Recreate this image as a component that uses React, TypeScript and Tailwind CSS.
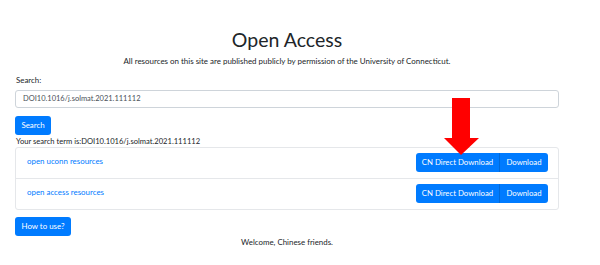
import React from "react";

function Row({ label }: { label: string }) {
  return (
    <div className="flex h-[30px] items-start justify-between pl-[11px] pr-[10px]">
      <a className="mt-[7px] text-[7.9px] leading-[12px] text-[#007bff]" href="#">
        {label}
      </a>
      <div className="mt-[5px] flex">
        <button className="h-[19px] w-[83px] rounded-l-[3px] bg-[#007bff] text-[7.8px] text-white">
          CN Direct Download
        </button>
        <button className="h-[19px] w-[49px] rounded-r-[3px] border-l border-[#0069d9] bg-[#007bff] text-[7.8px] text-white">
          Download
        </button>
      </div>
    </div>
  );
}

export default function App() {
  return (
    <div
      className="relative h-[265px] w-[600px] bg-white text-[#212529]"
      style={{ fontFamily: 'Lato, "Noto Sans", sans-serif' }}
    >
      <div className="ml-[15px] flex w-[544px] flex-col">
        <h1 className="mt-[27px] text-center text-[19.5px] leading-[26px]">Open Access</h1>
        <p className="mt-[2px] text-center text-[7.95px] leading-[12px]">
          All resources on this site are published publicly by permission of the University of Connecticut.
        </p>
        <div className="mt-[7px] pl-[1px] text-[7.9px] leading-[12px]">Search:</div>
        <div className="mt-[4px] flex h-[18px] items-center rounded-[3px] border border-[#ced4da] pl-[7px] text-[7.5px] text-[#495057]">
          DOI10.1016/j.solmat.2021.111112
        </div>
        <button className="mt-[8px] h-[19px] w-[36px] rounded-[3px] bg-[#007bff] text-[7.9px] text-white">
          Search
        </button>
        <div className="mt-[0px] pl-[1px] text-[7.6px] leading-[12px]">
          Your search term is:DOI10.1016/j.solmat.2021.111112
        </div>
        <div className="mt-[0px] rounded-[3px] border border-[#e5e7ea]">
          <Row label="open uconn resources" />
          <div className="border-t border-[#e5e7ea]" />
          <Row label="open access resources" />
        </div>
        <button className="mt-[7px] h-[19px] w-[56px] rounded-[3px] bg-[#007bff] text-[7.9px] text-white">
          How to use?
        </button>
        <div className="mt-[0px] text-center text-[7.9px] leading-[12px]">Welcome, Chinese friends.</div>
      </div>
      <svg className="absolute left-[444px] top-[98px]" width="36" height="58" viewBox="0 0 36 58">
        <polygon points="8,0 26,0 26,40 35,40 17,57 0,40 8,40" fill="#ff0000" />
      </svg>
    </div>
  );
}
